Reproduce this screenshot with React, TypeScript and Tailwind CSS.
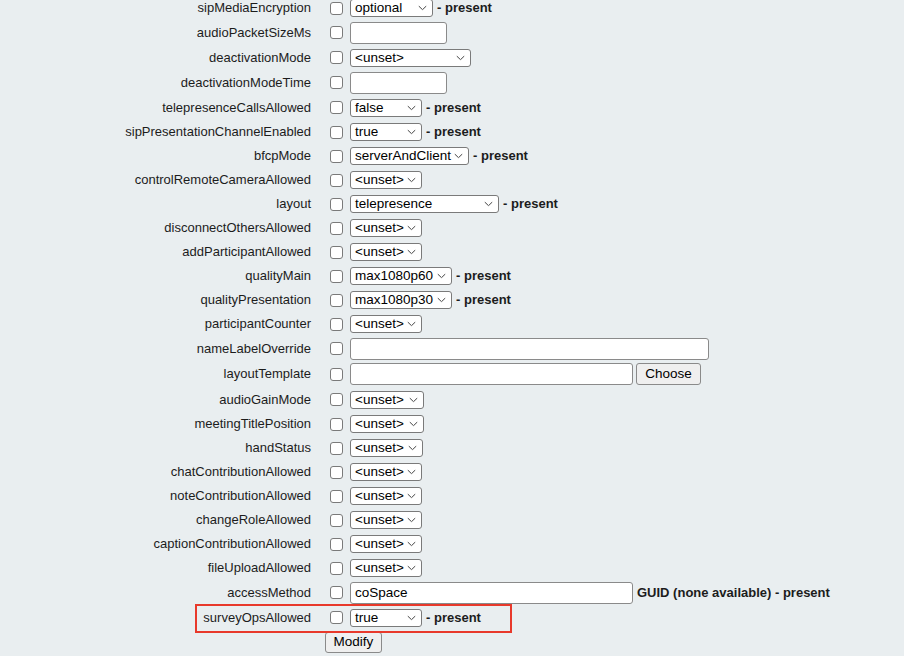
import React from "react";

type Ctl =
  | { kind: "select"; value: string; w: number; present?: boolean }
  | { kind: "input"; value?: string; w: number; extra?: React.ReactNode }
  | { kind: "file"; w: number };

type Row = { label: string; h: number; ctl: Ctl };

const rows: Row[] = [
  { label: "sipMediaEncryption", h: 24, ctl: { kind: "select", value: "optional", w: 83, present: true } },
  { label: "audioPacketSizeMs", h: 25, ctl: { kind: "input", w: 97 } },
  { label: "deactivationMode", h: 25, ctl: { kind: "select", value: "<unset>", w: 121 } },
  { label: "deactivationModeTime", h: 25, ctl: { kind: "input", w: 97 } },
  { label: "telepresenceCallsAllowed", h: 25, ctl: { kind: "select", value: "false", w: 72, present: true } },
  { label: "sipPresentationChannelEnabled", h: 24, ctl: { kind: "select", value: "true", w: 72, present: true } },
  { label: "bfcpMode", h: 24, ctl: { kind: "select", value: "serverAndClient", w: 119, present: true } },
  { label: "controlRemoteCameraAllowed", h: 24, ctl: { kind: "select", value: "<unset>", w: 72 } },
  { label: "layout", h: 24, ctl: { kind: "select", value: "telepresence", w: 149, present: true } },
  { label: "disconnectOthersAllowed", h: 24, ctl: { kind: "select", value: "<unset>", w: 72 } },
  { label: "addParticipantAllowed", h: 24, ctl: { kind: "select", value: "<unset>", w: 72 } },
  { label: "qualityMain", h: 24, ctl: { kind: "select", value: "max1080p60", w: 102, present: true } },
  { label: "qualityPresentation", h: 24, ctl: { kind: "select", value: "max1080p30", w: 102, present: true } },
  { label: "participantCounter", h: 24, ctl: { kind: "select", value: "<unset>", w: 72 } },
  { label: "nameLabelOverride", h: 25, ctl: { kind: "input", w: 359 } },
  { label: "layoutTemplate", h: 26, ctl: { kind: "file", w: 283 } },
  { label: "audioGainMode", h: 25, ctl: { kind: "select", value: "<unset>", w: 74 } },
  { label: "meetingTitlePosition", h: 24, ctl: { kind: "select", value: "<unset>", w: 74 } },
  { label: "handStatus", h: 24, ctl: { kind: "select", value: "<unset>", w: 73 } },
  { label: "chatContributionAllowed", h: 24, ctl: { kind: "select", value: "<unset>", w: 72 } },
  { label: "noteContributionAllowed", h: 24, ctl: { kind: "select", value: "<unset>", w: 72 } },
  { label: "changeRoleAllowed", h: 24, ctl: { kind: "select", value: "<unset>", w: 72 } },
  { label: "captionContributionAllowed", h: 24, ctl: { kind: "select", value: "<unset>", w: 72 } },
  { label: "fileUploadAllowed", h: 24, ctl: { kind: "select", value: "<unset>", w: 72 } },
  {
    label: "accessMethod",
    h: 25,
    ctl: {
      kind: "input",
      value: "coSpace",
      w: 283,
      extra: <span className="ml-[4px] font-bold">GUID (none available) - present</span>,
    },
  },
  { label: "surveyOpsAllowed", h: 25, ctl: { kind: "select", value: "true", w: 72, present: true } },
];

function Chevron() {
  return (
    <svg width="9" height="5" viewBox="0 0 9 5" className="absolute right-[5px] top-1/2 -translate-y-1/2">
      <path d="M1 0.8 L4.5 4.2 L8 0.8" fill="none" stroke="#444" strokeWidth="1" strokeLinecap="round" strokeLinejoin="round" />
    </svg>
  );
}

function Select({ value, w }: { value: string; w: number }) {
  return (
    <span
      className="relative inline-flex h-[18px] items-center rounded-[3px] border border-[#7a7a7a] bg-white pl-[4px] text-[13.5px] leading-none text-black"
      style={{ width: w }}
    >
      {value}
      <Chevron />
    </span>
  );
}

function TextInput({ value, w }: { value?: string; w: number }) {
  return (
    <span
      className="inline-flex h-[22px] items-center rounded-[3px] border border-[#8a8a8a] bg-white pl-[4px] text-[13.5px] leading-none text-black"
      style={{ width: w }}
    >
      {value ?? ""}
    </span>
  );
}

function Checkbox() {
  return <span className="inline-block h-[13px] w-[13px] shrink-0 rounded-[3px] border border-[#7a7a7a] bg-white" />;
}

function Present() {
  return <span className="ml-[4px] font-bold">- present</span>;
}

export default function App() {
  return (
    <div
      className="min-h-[656px] w-full overflow-hidden bg-[#e9eef0] text-[13px] text-[#1c1c1c]"
      style={{ fontFamily: '"Liberation Sans", Arial, Helvetica, sans-serif' }}
    >
      <div className="-mt-[4px] flex flex-col">
        {rows.map((r, i) => {
          const isSurvey = r.label === "surveyOpsAllowed";
          return (
            <div key={i} className="relative flex items-center" style={{ height: r.h }}>
              <div className="w-[311px] shrink-0 text-right">{r.label}</div>
              <div className="ml-[19px] flex items-center">
                <Checkbox />
              </div>
              <div className="ml-[7px] flex items-center">
                {r.ctl.kind === "select" && (
                  <>
                    <Select value={r.ctl.value} w={r.ctl.w} />
                    {r.ctl.present && <Present />}
                  </>
                )}
                {r.ctl.kind === "input" && (
                  <>
                    <TextInput value={r.ctl.value} w={r.ctl.w} />
                    {r.ctl.extra}
                  </>
                )}
                {r.ctl.kind === "file" && (
                  <>
                    <TextInput w={r.ctl.w} />
                    <button className="ml-[3px] flex h-[22px] w-[65px] items-center justify-center rounded-[3px] border border-[#8a8a8a] bg-[#efefef] text-[13.5px] text-black">
                      Choose
                    </button>
                  </>
                )}
              </div>
              {isSurvey && (
                <span className="pointer-events-none absolute left-[195px] top-[-1px] h-[29px] w-[317px] border-2 border-[#e8392b]" />
              )}
            </div>
          );
        })}
        <div className="flex h-[24px] items-center">
          <button className="ml-[325px] flex h-[21px] w-[57px] items-center justify-center rounded-[3px] border border-[#8a8a8a] bg-[#efefef] text-[13.5px] text-black">
            Modify
          </button>
        </div>
      </div>
    </div>
  );
}
